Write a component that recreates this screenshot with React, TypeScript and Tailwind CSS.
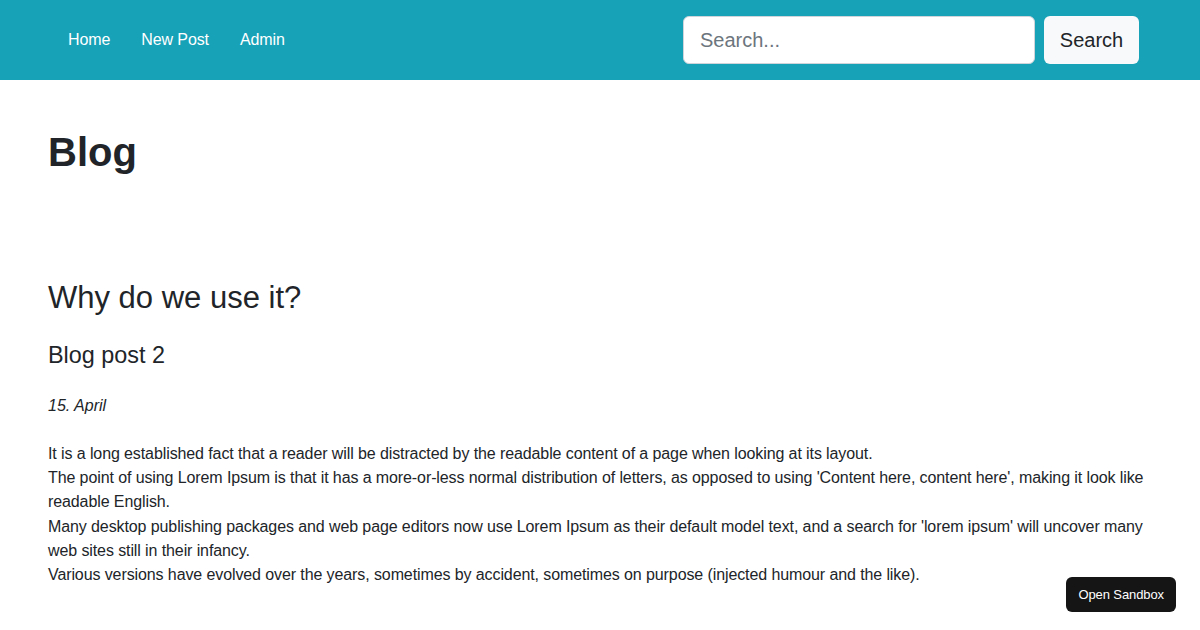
export default function App() {
  return (
    <div
      className="relative min-h-[630px] bg-white text-[#212529]"
      style={{ fontFamily: '"Liberation Sans", Arial, sans-serif' }}
    >
      <nav className="flex h-20 items-center justify-between bg-[#17a2b8] pl-[68px] pr-[61px]">
        <div className="flex gap-[31px] text-base tracking-[-0.1px] text-white">
          <a href="#">Home</a>
          <a href="#">New Post</a>
          <a href="#">Admin</a>
        </div>
        <form className="flex gap-[9px]" onSubmit={(e) => e.preventDefault()}>
          <input
            type="text"
            placeholder="Search..."
            className="h-12 w-[352px] rounded-md border border-[#ced4da] bg-white px-4 text-xl text-[#495057] placeholder:text-[#6c757d] outline-none"
          />
          <button
            type="submit"
            className="h-12 w-[95px] rounded-md bg-[#f8f9fa] text-xl text-[#212529]"
          >
            Search
          </button>
        </form>
      </nav>

      <main className="px-12">
        <h1 className="mt-12 text-[40px] font-bold leading-[48px]">Blog</h1>

        <h2 className="mt-[103px] text-[31px] leading-[38px]">
          Why do we use it?
        </h2>
        <h4 className="mt-[24px] text-[23.4px] leading-[29px]">Blog post 2</h4>
        <p className="mt-[24px] text-base italic leading-6">15. April</p>
        <p className="mt-[24px] text-base leading-[24.2px] tracking-[-0.1px]">
          It is a long established fact that a reader will be distracted by the
          readable content of a page when looking at its layout.
          <br />
          The point of using Lorem Ipsum is that it has a more-or-less normal
          distribution of letters, as opposed to using 'Content here, content
          here', making it look like readable English.
          <br />
          Many desktop publishing packages and web page editors now use Lorem
          Ipsum as their default model text, and a search for 'lorem ipsum'
          will uncover many web sites still in their infancy.
          <br />
          Various versions have evolved over the years, sometimes by accident,
          sometimes on purpose (injected humour and the like).
        </p>
      </main>

      <button className="absolute bottom-[18px] right-6 rounded-md bg-[#151515] px-3 py-2 text-[13px] tracking-[-0.1px] text-white">
        Open Sandbox
      </button>
    </div>
  );
}
